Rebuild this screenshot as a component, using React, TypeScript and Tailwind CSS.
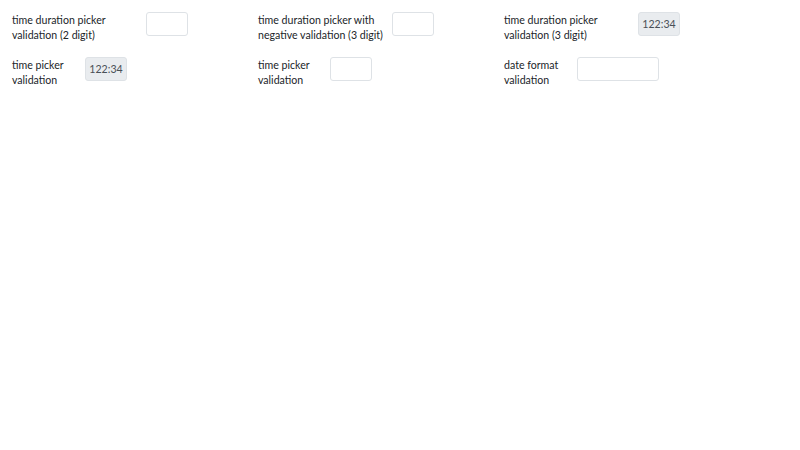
import React from 'react';

type Field = {
  label: string;
  labelWidth: string;
  inputWidth: string;
  value?: string;
  disabled?: boolean;
};

const FIELDS: Field[] = [
  { label: 'time duration picker validation (2 digit)', labelWidth: 'w-[134px]', inputWidth: 'w-[42px]' },
  { label: 'time duration picker with negative validation (3 digit)', labelWidth: 'w-[134px]', inputWidth: 'w-[42px]' },
  { label: 'time duration picker validation (3 digit)', labelWidth: 'w-[134px]', inputWidth: 'w-[42px]', value: '122:34', disabled: true },
  { label: 'time picker validation', labelWidth: 'w-[73px]', inputWidth: 'w-[42px]', value: '122:34', disabled: true },
  { label: 'time picker validation', labelWidth: 'w-[72px]', inputWidth: 'w-[42px]' },
  { label: 'date format validation', labelWidth: 'w-[73px]', inputWidth: 'w-[82px]' },
];

export default function App() {
  return (
    <div className="w-[800px] h-[450px] bg-white text-[#212529] font-['Lato',sans-serif]">
      <div className="grid grid-cols-[246px_246px_246px] gap-y-[14px] pl-3 pt-3">
        {FIELDS.map((f, i) => (
          <div key={i} className="flex items-start">
            <label className={`${f.labelWidth} shrink-0 pr-1 text-[10.6px] leading-[15px] pt-px`}>{f.label}</label>
            <input
              readOnly
              disabled={f.disabled}
              value={f.value ?? ''}
              className={`${f.inputWidth} h-6 rounded-[3px] border border-[#dee2e6] px-0 text-center text-[10.6px] text-[#495057] ${f.disabled ? 'bg-[#e9ecef]' : 'bg-white'}`}
            />
          </div>
        ))}
      </div>
    </div>
  );
}
